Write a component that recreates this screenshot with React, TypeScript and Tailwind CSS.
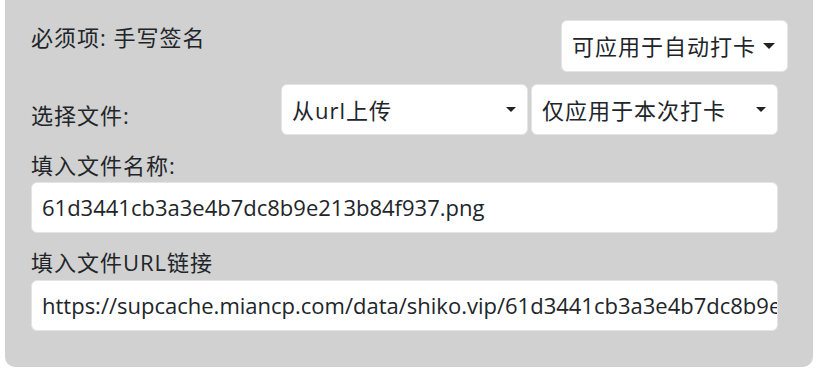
import React from "react";

const Caret = ({ w, h }: { w: number; h: number }) => (
  <svg width={w} height={h} viewBox={`0 0 ${w} ${h}`} className="block">
    <polygon points={`0,0 ${w},0 ${w / 2},${h}`} fill="#222" />
  </svg>
);

export default function App() {
  return (
    <div
      className="w-[834px] h-[382px] bg-white text-[#212529] text-[22px]"
      style={{ fontFamily: '"Open Sans", "Noto Sans CJK SC", sans-serif' }}
    >
      <div className="ml-[5px] w-[808px] h-[367px] bg-[#d1d1d1] rounded-b-[10px] pl-[26px] pr-[35px] pt-[20px]">
        <div className="flex justify-between items-start">
          <div className="mt-[1px] leading-[32px] tracking-[1px]">必须项: 手写签名</div>
          <div className="mr-[-10px] h-[52px] flex items-center bg-white rounded-[6px] border border-[#e4e4e4] pl-[10px] pr-[12px] gap-[7px]">
            <span className="leading-[32px] tracking-[1px]">可应用于自动打卡</span>
            <Caret w={12} h={6} />
          </div>
        </div>
        <div className="flex items-start mt-[12px]">
          <div className="w-[250px] mt-[15px] leading-[32px] tracking-[1px]">选择文件:</div>
          <div className="flex gap-[3px]">
            <div className="w-[247px] h-[51px] flex items-center justify-between bg-white rounded-[6px] border border-[#e4e4e4] pl-[10px] pr-[11px]">
              <span className="leading-[32px] tracking-[1px]">从url上传</span>
              <Caret w={10} h={5} />
            </div>
            <div className="w-[247px] h-[51px] flex items-center justify-between bg-white rounded-[6px] border border-[#e4e4e4] pl-[10px] pr-[11px]">
              <span className="leading-[32px] tracking-[1px]">仅应用于本次打卡</span>
              <Caret w={10} h={5} />
            </div>
          </div>
        </div>
        <div className="mt-[14px] leading-[32px] tracking-[1px]">填入文件名称:</div>
        <div className="mt-[1px] h-[51px] flex items-center bg-white rounded-[6px] border border-[#e4e4e4] pl-[10px] overflow-hidden whitespace-nowrap">
          61d3441cb3a3e4b7dc8b9e213b84f937.png
        </div>
        <div className="mt-[13px] leading-[32px] tracking-[1px]">填入文件URL链接</div>
        <div className="mt-[2px] h-[51px] flex items-center bg-white rounded-[6px] border border-[#e4e4e4] pl-[10px] overflow-hidden whitespace-nowrap">
          https://supcache.miancp.com/data/shiko.vip/61d3441cb3a3e4b7dc8b9e213b84f937.png
        </div>
      </div>
    </div>
  );
}
